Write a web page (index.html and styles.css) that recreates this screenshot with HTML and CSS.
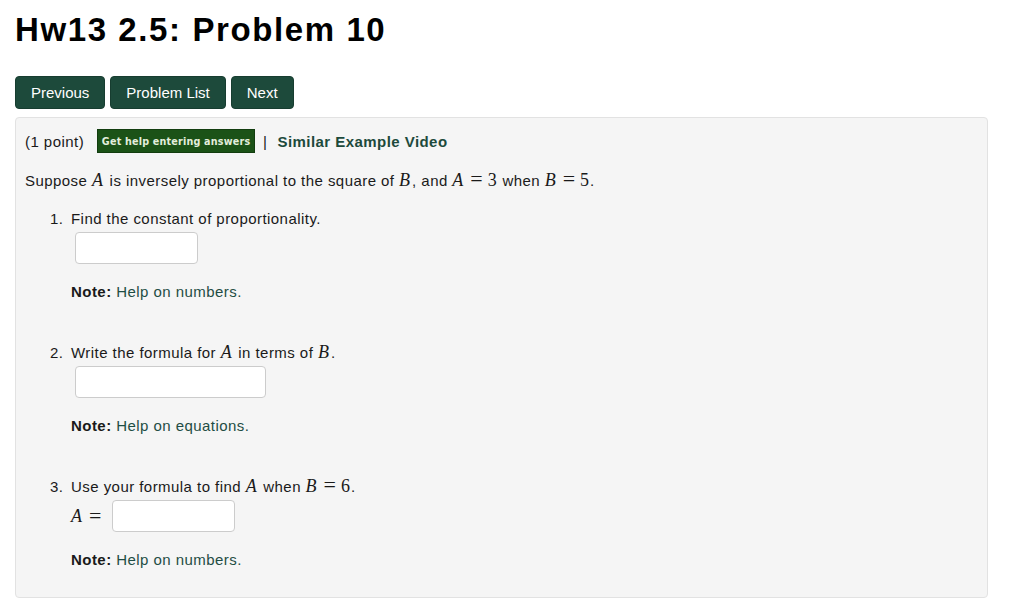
FILE: index.html
```html
<!DOCTYPE html>
<html>
<head>
<meta charset="utf-8">
<title>Hw13 2.5: Problem 10</title>
<link rel="stylesheet" href="styles.css">
</head>
<body>
<h1 class="title">Hw13 2.5: Problem 10</h1>
<div class="nav">
  <a class="btn" href="#">Previous</a>
  <a class="btn" href="#">Problem List</a>
  <a class="btn" href="#">Next</a>
</div>
<div class="panel">
  <div class="head">
    <span class="points">(1 point)</span>
    <span class="help">Get help entering answers</span>
    <span class="sep">|</span>
    <a class="video" href="#">Similar Example Video</a>
  </div>
  <p class="intro">Suppose <span class="mi">A</span> is inversely proportional to the square of <span class="mi">B</span>, and <span class="mi">A</span><span class="mo">=</span><span class="mn">3</span> when <span class="mi">B</span><span class="mo">=</span><span class="mn">5</span>.</p>
  <ol class="parts">
    <li class="part">
      <div class="q">Find the constant of proportionality.</div>
      <div class="ans"><span class="box w1"></span></div>
      <div class="note"><b>Note:</b> <a href="#">Help on numbers.</a></div>
    </li>
    <li class="part">
      <div class="q">Write the formula for <span class="mi">A</span> in terms of <span class="mi">B</span>.</div>
      <div class="ans"><span class="box w2"></span></div>
      <div class="note"><b>Note:</b> <a href="#">Help on equations.</a></div>
    </li>
    <li class="part">
      <div class="q">Use your formula to find <span class="mi">A</span> when <span class="mi">B</span><span class="mo">=</span><span class="mn">6</span>.</div>
      <div class="ans eq"><span class="lhs"><span class="mi">A</span><span class="mo">=</span></span><span class="box w1 tight"></span></div>
      <div class="note"><b>Note:</b> <a href="#">Help on numbers.</a></div>
    </li>
  </ol>
</div>
</body>
</html>
```

FILE: styles.css
```css
html, body {
  margin: 0;
  padding: 0;
  background: #ffffff;
}
body {
  padding: 0 36px 0 15px;
  font-family: "Liberation Sans", Arial, sans-serif;
  font-size: 15px;
  letter-spacing: 0.45px;
  color: #1a1a1a;
}
.title {
  margin: 12px 0 0 0;
  font-size: 33px;
  line-height: 36px;
  letter-spacing: 1.6px;
  font-weight: bold;
  color: #000;
}
.nav {
  display: flex;
  gap: 5px;
  margin-top: 28px;
}
.btn {
  display: flex;
  align-items: center;
  height: 33px;
  box-sizing: border-box;
  padding: 0 15px;
  background: #1d4a3b;
  border: 1px solid #173d30;
  border-radius: 4px;
  color: #ffffff;
  text-decoration: none;
  font-size: 15px;
  letter-spacing: 0;
}
.panel {
  margin-top: 8px;
  background: #f5f5f5;
  border: 1px solid #e2e2e2;
  border-radius: 4px;
  padding: 11px 9px 27px 9px;
}
.head {
  display: flex;
  align-items: center;
  height: 24px;
}
.points {
  margin-right: 13px;
}
.help {
  display: flex;
  align-items: center;
  justify-content: center;
  width: 158px;
  height: 24px;
  box-sizing: border-box;
  background: #1b5217;
  border: 1px solid #123d0f;
  color: #e4eedc;
  font-family: "DejaVu Sans", sans-serif;
  font-weight: bold;
  font-size: 9.6px;
  letter-spacing: 0.2px;
  white-space: nowrap;
}
.sep {
  margin: 0 10px 0 8px;
}
.video {
  font-weight: bold;
  color: #1d4a3c;
  text-decoration: none;
}
.intro {
  margin: 18px 0 0 0;
  line-height: 20px;
}
.mi, .mn, .mo {
  font-family: "Liberation Serif", "Times New Roman", serif;
  font-size: 18px;
  line-height: 10px;
  letter-spacing: 0;
}
.mi {
  font-style: italic;
  margin-right: 2px;
}
.mo {
  font-size: 22px;
  margin: 0 5px 0 5px;
}
.mn {
  margin-right: 1px;
}
.parts {
  list-style: none;
  counter-reset: part;
  margin: 18px 0 0 25px;
  padding: 0;
}
.part {
  counter-increment: part;
  display: grid;
  grid-template-columns: 21px auto;
  margin-bottom: 41px;
}
.part:last-child {
  margin-bottom: 0;
}
.part::before {
  content: counter(part) ".";
  grid-column: 1;
  grid-row: 1;
  line-height: 20px;
}
.q, .ans, .note {
  grid-column: 2;
}
.q {
  line-height: 20px;
}
.ans {
  display: flex;
  align-items: center;
  margin-top: 3px;
}
.box {
  display: block;
  height: 32px;
  box-sizing: border-box;
  margin-left: 4px;
  background: #ffffff;
  border: 1px solid #cccccc;
  border-radius: 4px;
}
.w1 { width: 123px; }
.w2 { width: 191px; }
.lhs {
  display: flex;
  align-items: center;
  margin-right: 6px;
}
.lhs .mo {
  margin-right: 0;
}
.box.tight {
  margin-left: 5px;
}
.note {
  margin-top: 18px;
  line-height: 20px;
}
.note b {
  font-weight: bold;
}
.note a {
  color: #1f4d44;
  text-decoration: none;
}
```
